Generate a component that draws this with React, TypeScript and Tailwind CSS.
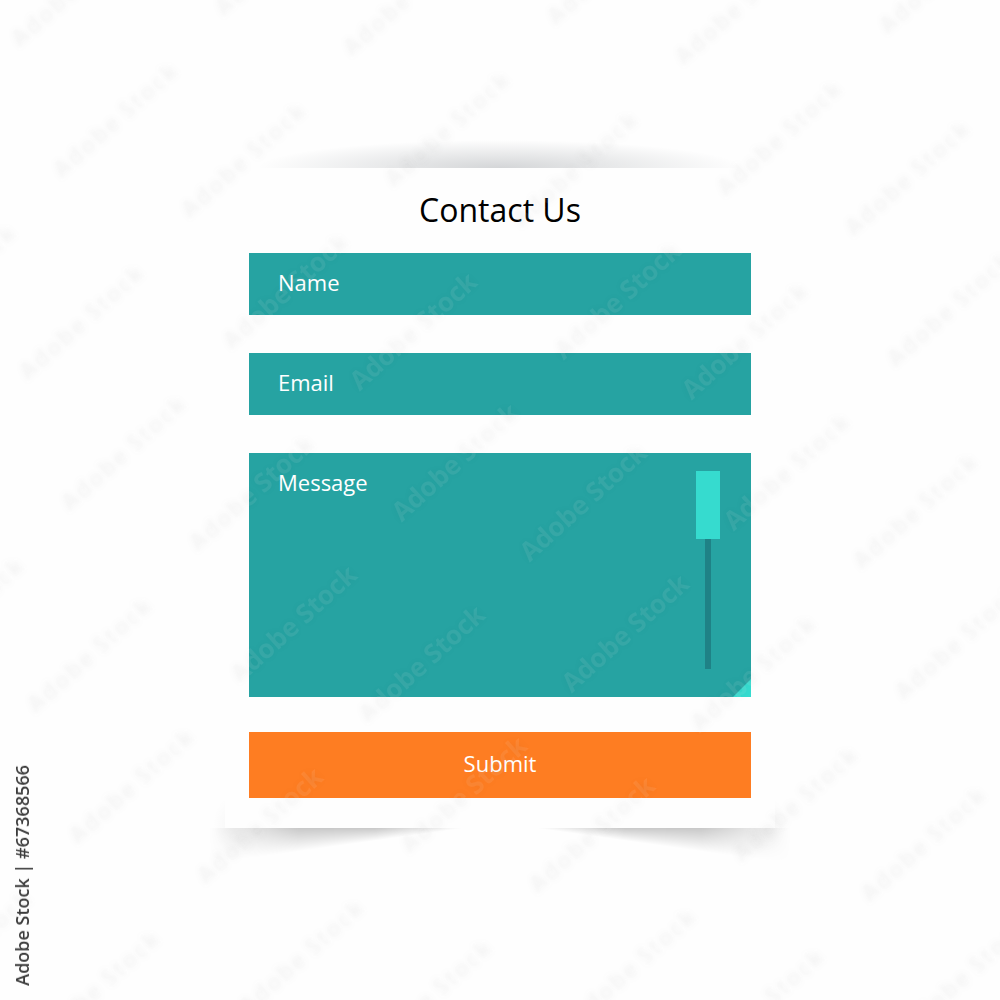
import React, { useState } from 'react';

const FONT = "font-['Open_Sans','Noto_Sans',sans-serif]";

const FIELD_CLASS =
  'block w-full resize-none bg-[#26a3a2] px-[29px] text-[22px] leading-[30px] text-white placeholder:text-white placeholder:opacity-100 outline-none focus-visible:ring-2 focus-visible:ring-[#36dbcf]';

// The mark repeats on a slanted grid, two marks per cell
const MARKS: { x: number; y: number }[] = [];
for (let col = -4; col <= 4; col++) {
  for (let row = -4; row <= 7; row++) {
    const x = 63 + col * 332 + row * 170;
    const y = 182 + col * 9 + row * 171;
    MARKS.push({ x, y }, { x: x + 128, y: y + 40 });
  }
}
const VISIBLE_MARKS = MARKS.filter(({ x, y }) => x > -160 && x < 1010 && y > -10 && y < 1150);

function Watermark() {
  return (
    <div aria-hidden="true" className="pointer-events-none fixed inset-0 z-20 select-none overflow-hidden">
      {VISIBLE_MARKS.map(({ x, y }) => (
        <span
          key={`${x}-${y}`}
          className="absolute h-6 origin-bottom-left -rotate-42 -translate-y-full whitespace-nowrap text-[26px] leading-6 font-bold text-white/8 [text-shadow:0_0_4px_rgba(0,0,0,0.025),0_0_8px_rgba(0,0,0,0.04)]"
          style={{ left: x, top: y }}
        >
          Adobe Stock
        </span>
      ))}
    </div>
  );
}

function StockId() {
  return (
    <div className="fixed bottom-3.5 left-2 z-30 rotate-180 text-lg leading-7 font-semibold whitespace-nowrap text-[#3c3c3c] [writing-mode:vertical-rl]">
      Adobe Stock | #67368566
    </div>
  );
}

const CORNER_CLASS =
  'absolute top-full h-9 w-64 bg-[conic-gradient(from_262deg_at_100%_0,transparent_0deg,rgba(0,0,0,0.05)_2deg,rgba(0,0,0,0.21)_8deg,transparent_9deg)] [mask-image:linear-gradient(to_right,transparent,black_35%,black_65%,transparent)]';

function CardShadows() {
  return (
    <>
      {/* Top arc */}
      <div className="absolute inset-x-8 bottom-full h-7 bg-[radial-gradient(ellipse_50%_100%_at_50%_100%,rgba(20,30,40,0.18),rgba(20,30,40,0.09)_50%,transparent)]" />
      {/* Lifted bottom corners */}
      <div className={`${CORNER_CLASS} -left-4`} />
      <div className={`${CORNER_CLASS} -right-4 -scale-x-100`} />
      {/* Faint spill past the card's sides */}
      <div className="absolute -bottom-6 -left-3 h-14 w-10 bg-[radial-gradient(closest-side,rgba(0,0,0,0.03),transparent)]" />
      <div className="absolute -right-3 -bottom-6 h-14 w-10 bg-[radial-gradient(closest-side,rgba(0,0,0,0.03),transparent)]" />
    </>
  );
}

function App() {
  const [name, setName] = useState('');
  const [email, setEmail] = useState('');
  const [message, setMessage] = useState('');

  return (
    <div className={`min-h-screen bg-[#fefefe] px-4 pt-42 pb-42 ${FONT}`}>
      <main className="relative mx-auto max-w-[550px]">
        <CardShadows />

        <form className="relative bg-[#fefefe] px-6 pb-[30px]" onSubmit={(e) => e.preventDefault()}>
          <h1 className="pt-[17px] pb-[19px] text-center text-[32px] leading-[49px] text-black">Contact Us</h1>

          <div className="flex flex-col gap-[38px]">
            <div>
              <label htmlFor="name" className="sr-only">Name</label>
              <input
                id="name"
                type="text"
                placeholder="Name"
                value={name}
                onChange={(e) => setName(e.target.value)}
                className={`${FIELD_CLASS} h-[62px] pb-1`}
              />
            </div>

            <div>
              <label htmlFor="email" className="sr-only">Email</label>
              <input
                id="email"
                type="email"
                placeholder="Email"
                value={email}
                onChange={(e) => setEmail(e.target.value)}
                className={`${FIELD_CLASS} h-[62px] pb-1`}
              />
            </div>

            <div className="relative">
              <label htmlFor="message" className="sr-only">Message</label>
              <textarea
                id="message"
                placeholder="Message"
                value={message}
                onChange={(e) => setMessage(e.target.value)}
                className={`${FIELD_CLASS} h-[244px] pt-3.5 pb-4`}
              />
              {/* Scroll bar */}
              <div className="pointer-events-none absolute top-[18px] right-[31px] flex flex-col items-center">
                <div className="h-[68px] w-6 bg-[#36dbcf]" />
                <div className="h-[130px] w-1.5 bg-[#1f8286]" />
              </div>
              {/* Resize corner */}
              <div className="pointer-events-none absolute right-0 bottom-0 size-[18px] bg-[#36dbcf] [clip-path:polygon(100%_0,100%_100%,0_100%)]" />
            </div>
          </div>

          <button type="submit" className="mt-[35px] block h-[66px] w-full cursor-pointer bg-[#fe7d22] pb-1 text-[22px] leading-[30px] text-white">
            Submit
          </button>
        </form>
      </main>

      <Watermark />
      <StockId />
    </div>
  );
}

export default App;
